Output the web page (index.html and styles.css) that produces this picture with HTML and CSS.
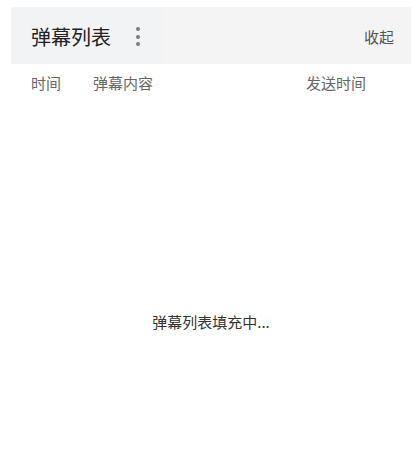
FILE: index.html
```html
<!DOCTYPE html>
<html lang="zh-CN">
<head>
  <meta charset="UTF-8" />
  <meta name="viewport" content="width=device-width, initial-scale=1.0"/>
  <title>弹幕列表</title>
  <link rel="stylesheet" href="styles.css">
</head>
<body>
  <div class="panel">
    <!-- 顶部标题栏 -->
    <div class="panel-head">
      <div class="head-title">
        <span class="title">弹幕列表</span>
        <span class="more">
          <i></i><i></i><i></i>
        </span>
      </div>
      <span class="fold">收起</span>
    </div>

    <!-- 表头 -->
    <div class="cols">
      <span class="col-time">时间</span>
      <span class="col-text">弹幕内容</span>
      <span class="col-send">发送时间</span>
    </div>

    <!-- 列表 -->
    <div class="list">
      <p class="empty">弹幕列表填充中...</p>
    </div>
  </div>
</body>
</html>
```

FILE: styles.css
```css
body {
  margin: 0;
  padding: 7px 9px 0 11px;
  background: #fff;
  font-family: "Noto Sans CJK SC", "Noto Sans", sans-serif;
  color: #333;
  overflow: hidden;
}

.panel {
  width: 400px;
}

.panel-head {
  display: flex;
  align-items: center;
  justify-content: space-between;
  height: 57px;
  background: #f4f4f4;
}

.head-title {
  display: flex;
  align-items: center;
  height: 100%;
  padding: 0 22px 0 20px;
  background: #f2f3f5;
}

.title {
  font-size: 20px;
  line-height: 28px;
  color: #222;
  margin-top: 2px;
}

.more {
  display: flex;
  flex-direction: column;
  gap: 3.5px;
  margin-left: 25px;
  margin-top: 2px;
}

.more i {
  display: block;
  width: 4px;
  height: 4px;
  border-radius: 50%;
  background: #7a7a7a;
}

.fold {
  font-size: 15px;
  color: #555;
  padding-right: 17px;
  margin-top: 1px;
}

.cols {
  display: flex;
  align-items: center;
  height: 37px;
  padding-left: 20px;
  font-size: 15px;
  color: #666;
}

.col-time {
  width: 62px;
}

.col-text {
  width: 213px;
}

.list {
  text-align: center;
}

.empty {
  margin: 210px 0 0;
  font-size: 15px;
  line-height: 22px;
  color: #333;
}
```
